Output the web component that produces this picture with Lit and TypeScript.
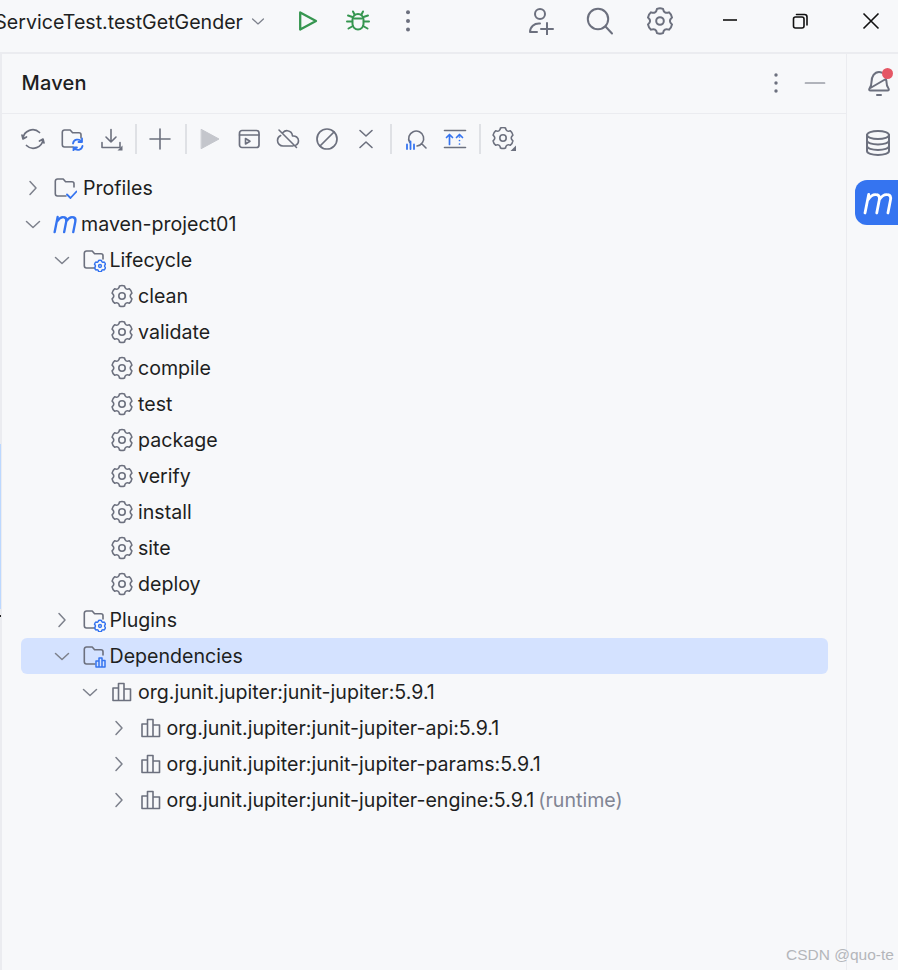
import { LitElement, html, css, svg } from "lit";
import { customElement } from "lit/decorators.js";

const gearPath = (cx: number, cy: number, R: number, r: number) => {
  let d = "";
  const pt = (deg: number, rad: number) => {
    const a = (deg * Math.PI) / 180;
    return `${(cx + rad * Math.cos(a)).toFixed(2)} ${(cy + rad * Math.sin(a)).toFixed(2)}`;
  };
  for (let i = 0; i < 6; i++) {
    const a = -90 + i * 60;
    d += `${i === 0 ? "M" : "L"}${pt(a - 14, R)} Q${pt(a, R * 1.06)} ${pt(a + 14, R)} Q${pt(a + 30, r)} ${pt(a + 46, R)} `;
  }
  return d + "Z";
};

const gearTop = (cx: number, cy: number, R: number, r: number, hole: number, sw = 1.6) => svg`
  <path d=${gearPath(cx, cy, R, r)} stroke-width=${sw} stroke-linejoin="round"/>
  <circle cx=${cx} cy=${cy} r=${hole} stroke-width=${sw}/>`;

const ic = (content: unknown, size = 24, vb = 24) => html`<svg class="ic" width=${size} height=${size} viewBox="0 0 ${vb} ${vb}" fill="none" stroke="#6c707e" stroke-width="1.6" stroke-linecap="round" stroke-linejoin="round">${content}</svg>`;

const corner = svg`<path d="M23.5 18.5v5h-5z" fill="#6c707e" stroke="none"/>`;
const folder = svg`<path d="M4.500 3h5.700l2.400 2.800h6.400a2 2 0 0 1 2 2V11M13 20H4.500a2.200 2.200 0 0 1-2.200-2.200V5.200A2.200 2.200 0 0 1 4.500 3"/>`;
const lib = svg`<path d="M3 20.500V8h5.500v12.500M8.500 20.500V3.500H14v17M14 20.500V9h6.500v11.500zM3 20.500h17.500"/>`;
const mLogo = (stroke: string, sw: number) => svg`<path d="M1.500 19.500 4.300 5.500M3.800 9.500c2-3 4.500-4.200 6.500-3.700 1.800.4 2.300 2 1.900 4l-1.900 9.700M12.200 9.500c2-3 4.500-4.200 6.500-3.700 1.800.4 2.300 2 1.900 4l-1.900 9.700" stroke=${stroke} stroke-width=${sw}/>`;

const icons = {
  chevD: ic(svg`<path d="M5.500 9.500 12 15.500 18.500 9.500" stroke-width="1.500" stroke="#7d818c"/>`),
  chevR: ic(svg`<path d="M9 5.500 15 12 9 18.500" stroke-width="1.500" stroke="#7d818c"/>`),
  run: ic(svg`<path d="M4.200 3.500 20 12 4.200 20.500Z" stroke="#369650" stroke-width="2.300"/>`),
  bug: ic(svg`<g stroke="#369650" stroke-width="2"><rect x="6.500" y="5" width="11" height="15.500" rx="5.500"/><path d="M8 9.500h8M8.500 5.500l-1.500-3M15.500 5.500l1.500-3M6 12.500H1M18 12.500h5M6.500 8 2 6.500M17.500 8 22 6.500M7 17l-4.500 2.500M17 17l4.500 2.500"/></g>`),
  dots: ic(svg`<g fill="#6c707e" stroke="none"><circle cx="12" cy="3.300" r="2"/><circle cx="12" cy="12" r="2"/><circle cx="12" cy="20.500" r="2"/></g>`),
  person: ic(svg`<circle cx="13" cy="7" r="5" stroke-width="2"/><path d="M3 25c0-5 4-9 10-8.500M3 25h7M20 16v12M14 22h12" stroke-width="2"/>`, 28, 28),
  search: ic(svg`<circle cx="12" cy="12" r="10.200" stroke-width="2"/><path d="M19.500 19.500 26 26.500" stroke-width="2"/>`, 28, 28),
  gearBig: ic(gearTop(14, 14, 12.500, 7.800, 3.800, 2), 28, 28),
  min: ic(svg`<path d="M5 11h14" stroke="#111" stroke-width="1.600" stroke-linecap="butt"/>`),
  restore: ic(svg`<g stroke="#111" stroke-width="1.600"><rect x="5.500" y="8" width="10.500" height="11" rx="2"/><path d="M8.500 5.500h8a2.500 2.500 0 0 1 2.500 2.500v8"/></g>`),
  close: ic(svg`<path d="M4.500 4.500 19.500 19.500M19.500 4.500 4.500 19.500" stroke="#111" stroke-width="1.600" stroke-linecap="butt"/>`),
  dotsSm: ic(svg`<g fill="#6c707e" stroke="none"><circle cx="12" cy="4" r="1.700"/><circle cx="12" cy="12" r="1.700"/><circle cx="12" cy="20" r="1.700"/></g>`),
  minSm: ic(svg`<path d="M2.500 12h19" stroke="#9a9da6" stroke-width="1.700"/>`),
  refresh: ic(svg`<path d="M2 11.500A9.800 9.800 0 0 1 18.500 5.500M1 8l1 4 3.500-2M22 12.500A9.800 9.800 0 0 1 5.500 18.500M23 16l-1-4-3.500 2" stroke-width="1.700"/>`),
  folderSync: ic(svg`${folder}<g stroke="#3574f0" stroke-width="1.800"><path d="M13 16.500a4.800 4.800 0 0 1 8.400-2.200M22 11.500v3.500h-3.500M22.500 19a4.800 4.800 0 0 1-8.400 2.200M13.500 24v-3.500H17"/></g>`),
  download: ic(svg`<path d="M12 2.500v12.500M7 10l5 5 5-5M3 15.500V20.500h18v-5"/>${corner}`),
  plus: ic(svg`<path d="M12 2v20M2 12h20"/>`),
  runGrey: ic(svg`<path d="M3.500 2.500 21 12 3.500 21.500Z" fill="#c4c6cc" stroke="#c4c6cc" stroke-width="1"/>`),
  window: ic(svg`<rect x="2.500" y="3.500" width="19.500" height="17" rx="2.500" stroke-width="1.700"/><path d="M2.500 8h19.500M8.500 11.500v5.500l4.500-2.700z"/>`),
  cloudOff: ic(svg`<path d="M7 5.500c1.300-1.500 3-2 4.500-1.800 3 .4 4.800 2.600 5 5.300 3-.4 6 1.500 6 4.700 0 2-1 3.600-2.500 4.300M17 19H7a5.500 5.500 0 0 1-5.500-5.500c0-2.300 1.300-4.200 3.200-5M3 3l17.500 17.500" stroke-width="1.600"/>`),
  skip: ic(svg`<circle cx="12" cy="12" r="10" stroke-width="1.700"/><path d="M5 19 19 5" stroke-width="1.700"/>`),
  collapse: ic(svg`<path d="M6 3.500 12 9l6-5.500M6 20.500 12 15l6 5.500"/>`),
  analyze: ic(svg`<path d="M5.800 15.500A7.500 7.500 0 1 1 13 19M17.500 16.500 22 21"/><path d="M3 17.500V22M6.500 14.500V22M10 17.500V22" stroke="#3574f0" stroke-width="1.800"/>`),
  upload: ic(svg`<path d="M1.500 3.500h21M1.500 20.500h21" stroke="#6c707e"/><path d="M6.500 17.500V7.500M3.500 10.500l3-3 3 3M16.500 10v.01M16.500 13.500v.01M16.500 17v.01M13.500 10.500l3-3 3 3" stroke="#3574f0" stroke-width="1.700"/>`),
  gearCorner: ic(svg`${gearTop(11, 11, 10.300, 6.500, 3.200)}${svg`<path d="M24 18.500v5.500h-5.500z" fill="#6c707e" stroke="none"/>`}`),
  gear: ic(gearTop(12, 12, 10.300, 6.500, 3.200)),
  profiles: ic(svg`${folder}<path d="M14 18.500l3.500 3.500 6-6.500" stroke="#3574f0" stroke-width="1.800"/>`),
  mBlue: ic(mLogo("#3574f0", 2.200), 26, 24),
  folderGear: ic(svg`${folder}${svg`<g stroke="#3574f0">${gearTop(18, 18, 5.700, 3.600, 1.400, 1.500)}</g>`}`),
  folderLib: ic(svg`${folder}<path d="M14 23v-6h3v6M17 23v-9h3v9M20 23v-6.500h3V23zM14 23h9" stroke="#3574f0" stroke-width="1.500"/>`),
  lib: ic(lib),
  bell: ic(svg`<path d="M5.500 19.500c1.500-2 2-3.500 2-6.500 0-5.500 3-10 7.500-10 1 0 2 .2 2.800.6M21.800 10c.5 1 .7 2 .7 3 0 3 .5 4.500 2 6.500 .7 1.200.2 2-1 2H6.500c-1.200 0-1.700-.8-1-2ZM13 26h4" stroke-width="2"/>`, 28, 28),
  db: ic(svg`<ellipse cx="14" cy="6" rx="11" ry="4" stroke-width="2"/><path d="M3 6v16c0 2.400 5 4 11 4s11-1.600 11-4V6M3 11.500c0 2.400 5 4 11 4s11-1.600 11-4M3 17c0 2.400 5 4 11 4s11-1.600 11-4" stroke-width="2"/>`, 28, 28),
  mWhite: html`<svg class="ic" width="32" height="32" viewBox="0 0 24 24" fill="none" stroke-linecap="round" stroke-linejoin="round">${mLogo("#fff", 2.100)}</svg>`,
};

type Row = { depth: number; chev?: "chevD" | "chevR"; icon: keyof typeof icons; label: string; note?: string; selected?: boolean; wide?: boolean };

const rows: Row[] = [
  { depth: 0, chev: "chevR", icon: "profiles", label: "Profiles", wide: true },
  { depth: 0, chev: "chevD", icon: "mBlue", label: "maven-project01" },
  { depth: 1, chev: "chevD", icon: "folderGear", label: "Lifecycle" },
  ...["clean", "validate", "compile", "test", "package", "verify", "install", "site", "deploy"].map(
    (label): Row => ({ depth: 2, icon: "gear", label })
  ),
  { depth: 1, chev: "chevR", icon: "folderGear", label: "Plugins" },
  { depth: 1, chev: "chevD", icon: "folderLib", label: "Dependencies", selected: true },
  { depth: 2, chev: "chevD", icon: "lib", label: "org.junit.jupiter:junit-jupiter:5.9.1" },
  { depth: 3, chev: "chevR", icon: "lib", label: "org.junit.jupiter:junit-jupiter-api:5.9.1" },
  { depth: 3, chev: "chevR", icon: "lib", label: "org.junit.jupiter:junit-jupiter-params:5.9.1" },
  { depth: 3, chev: "chevR", icon: "lib", label: "org.junit.jupiter:junit-jupiter-engine:5.9.1", note: "(runtime)" },
];

const toolbar: (keyof typeof icons | "|")[] = [
  "refresh", "folderSync", "download", "|", "plus", "|", "runGrey", "window", "cloudOff", "skip", "collapse", "|", "analyze", "upload", "|", "gearCorner",
];

@customElement("app-root")
export class AppRoot extends LitElement {
  static styles = css`
    :host {
      display: block;
      position: relative;
      width: 898px;
      height: 970px;
      overflow: hidden;
      background: #f7f8fa;
      color: #1e1f22;
      font-family: Inter, "Noto Sans", sans-serif;
      font-size: 19.6px;
    }
    .ic { display: block; flex: none; }
    .top {
      height: 52px;
      box-sizing: content-box;
      display: flex;
      align-items: flex-start;
      border-bottom: 2px solid #ebecf0;
    }
    .title {
      width: 243px;
      height: 44px;
      line-height: 44px;
      overflow: hidden;
      display: flex;
      justify-content: flex-end;
      white-space: nowrap;
      flex: none;
    }
    .tb { flex: none; height: 42px; display: flex; align-items: center; justify-content: center; }
    .chevTitle { width: 30px; }
    .chevTitle .ic { width: 20px; height: 20px; }
    .run { width: 50px; margin-left: 10px; }
    .bug { width: 50px; }
    .more { width: 50px; }
    .person { width: 59px; margin-left: 78px; }
    .search { width: 60px; }
    .gear { width: 60px; }
    .min { width: 70px; margin-left: 5px; }
    .restore { width: 70px; }
    .close { width: 72px; }
    .main { display: flex; height: 916px; }
    .sliver {
      width: 2px;
      flex: none;
      background: #ebecf0;
      display: flex;
      flex-direction: column;
    }
    .sliver i { display: block; width: 1px; }
    .sliver .hl { margin-top: 390px; height: 165px; background: #bcd8ff; }
    .sliver .bk { margin-top: 6px; height: 2px; background: #222; }
    .panel { flex: 1; min-width: 0; }
    .phead {
      height: 59px;
      display: flex;
      align-items: center;
      padding-left: 19.500px;
      border-bottom: 1px solid #ebecf0;
    }
    .phead .name { flex: 1; font-weight: 500; font-size: 20px; letter-spacing: 0.2px; margin-top: -2px; }
    .phead .a { width: 30px; display: flex; justify-content: center; margin-top: -1px; }
    .phead .b { width: 30px; margin-left: 9px; margin-right: 16px; display: flex; justify-content: center; margin-top: -1px; }
    .tools { height: 49px; display: flex; align-items: center; padding: 0 0 0 11px; }
    .tool { width: 39px; display: flex; justify-content: center; flex: none; }
    .sep { width: 10.700px; flex: none; display: flex; justify-content: center; }
    .sep i { display: block; width: 2px; height: 30px; margin-left: 1px; background: #dfe1e5; }
    .tree { padding-top: 7px; }
    .row {
      height: 36px;
      margin: 0 18px 0 19px;
      display: flex;
      align-items: center;
      border-radius: 6px;
      white-space: nowrap;
    }
    .row.sel { background: #d4e2ff; }
    .slot { width: 24px; flex: none; }
    .cicon { margin: 0 4px 0 8px; }
    .row.wide .cicon { margin-right: 6px; }
    .note { color: #818594; margin-left: 4px; }
    .stripe {
      width: 51px;
      flex: none;
      border-left: 1px solid #ebecf0;
      display: flex;
      flex-direction: column;
      align-items: flex-start;
    }
    .sb { width: 51px; display: flex; justify-content: center; padding-left: 10px; box-sizing: border-box; position: relative; }
    .sb.bell { margin-top: 15px; }
    .sb.db { margin-top: 32px; }
    .badge {
      position: absolute;
      left: 35px;
      top: -1px;
      width: 11px;
      height: 11px;
      background: #e55765;
      border-radius: 50%;
    }
    .m {
      margin: 23px 0 0 8px;
      width: 43px;
      height: 45px;
      background: #3574f0;
      border-radius: 12px 0 0 12px;
      display: flex;
      align-items: center;
      justify-content: center;
      padding-left: 4px;
      box-sizing: border-box;
    }
    .wm {
      position: absolute;
      left: 786px;
      top: 946px;
      font: 15.5px "Liberation Sans", Arial, sans-serif;
      color: #b4b6ba;
      white-space: nowrap;
    }
  `;

  render() {
    return html`
      <div class="top">
        <div class="title"><span>ServiceTest.testGetGender</span></div>
        <div class="tb chevTitle">${icons.chevD}</div>
        <div class="tb run">${icons.run}</div>
        <div class="tb bug">${icons.bug}</div>
        <div class="tb more">${icons.dots}</div>
        <div class="tb person">${icons.person}</div>
        <div class="tb search">${icons.search}</div>
        <div class="tb gear">${icons.gearBig}</div>
        <div class="tb min">${icons.min}</div>
        <div class="tb restore">${icons.restore}</div>
        <div class="tb close">${icons.close}</div>
      </div>
      <div class="main">
        <div class="sliver"><i class="hl"></i><i class="bk"></i></div>
        <div class="panel">
          <div class="phead">
            <div class="name">Maven</div>
            <div class="a">${icons.dotsSm}</div>
            <div class="b">${icons.minSm}</div>
          </div>
          <div class="tools">
            ${toolbar.map((t) =>
              t === "|"
                ? html`<div class="sep"><i></i></div>`
                : html`<div class="tool">${icons[t]}</div>`
            )}
          </div>
          <div class="tree">
            ${rows.map(
              (r) => html`
                <div class="row ${r.selected ? "sel" : ""} ${r.wide ? "wide" : ""}" style="padding-left:${r.depth * 28.5}px">
                  <div class="slot">${r.chev ? icons[r.chev] : ""}</div>
                  <div class="slot cicon">${icons[r.icon]}</div>
                  <span>${r.label}</span>${r.note ? html`<span class="note">${r.note}</span>` : ""}
                </div>
              `
            )}
          </div>
        </div>
        <div class="stripe">
          <div class="sb bell">${icons.bell}<span class="badge"></span></div>
          <div class="sb db">${icons.db}</div>
          <div class="m">${icons.mWhite}</div>
        </div>
      </div>
      <div class="wm">CSDN @quo-te</div>
    `;
  }
}
